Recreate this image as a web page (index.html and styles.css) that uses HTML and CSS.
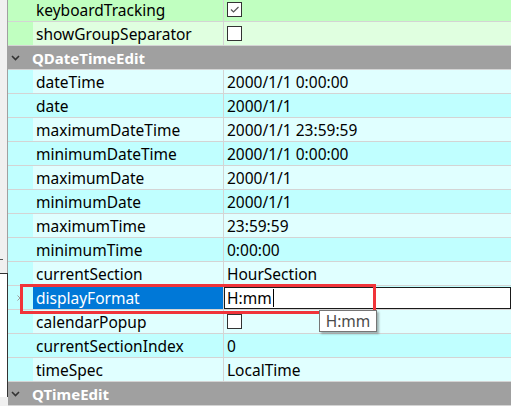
FILE: index.html
```html
<!DOCTYPE html>
<html>
<head>
<meta charset="utf-8">
<link rel="stylesheet" href="styles.css">
</head>
<body>
<div class="screen">
  <div class="side">
    <div class="side-top"><span class="dash"></span></div>
    <div class="side-mid"></div>
    <div class="side-bot"></div>
  </div>
  <div class="tree">
    <div class="row green dark"><div class="branch"></div><div class="name">keyboardTracking</div><div class="value"><span class="check on"><svg width="11" height="11" viewBox="0 0 11 11"><polyline points="2,5.5 4.5,8 9.5,3" fill="none" stroke="#555" stroke-width="1.2"/></svg></span></div></div>
    <div class="row green light"><div class="branch"></div><div class="name">showGroupSeparator</div><div class="value"><span class="check"></span></div></div>
    <div class="group"><svg class="chev" width="9" height="6" viewBox="0 0 9 6"><polyline points="1,1 4.5,4.5 8,1" fill="none" stroke="#333" stroke-width="1.6"/></svg><span>QDateTimeEdit</span></div>
    <div class="row cyan light"><div class="branch"></div><div class="name">dateTime</div><div class="value">2000/1/1 0:00:00</div></div>
    <div class="row cyan dark"><div class="branch"></div><div class="name">date</div><div class="value">2000/1/1</div></div>
    <div class="row cyan light"><div class="branch"></div><div class="name">maximumDateTime</div><div class="value">2000/1/1 23:59:59</div></div>
    <div class="row cyan dark"><div class="branch"></div><div class="name">minimumDateTime</div><div class="value">2000/1/1 0:00:00</div></div>
    <div class="row cyan light"><div class="branch"></div><div class="name">maximumDate</div><div class="value">2000/1/1</div></div>
    <div class="row cyan dark"><div class="branch"></div><div class="name">minimumDate</div><div class="value">2000/1/1</div></div>
    <div class="row cyan light"><div class="branch"></div><div class="name">maximumTime</div><div class="value">23:59:59</div></div>
    <div class="row cyan dark"><div class="branch"></div><div class="name">minimumTime</div><div class="value">0:00:00</div></div>
    <div class="row cyan light"><div class="branch"></div><div class="name">currentSection</div><div class="value">HourSection</div></div>
    <div class="row cyan dark"><div class="branch"><svg class="mark" width="4" height="6" viewBox="0 0 4 6"><polyline points="0.5,0.5 3,3 0.5,5.5" fill="none" stroke="#9a9a9a" stroke-width="1"/></svg></div><div class="name selected">displayFormat</div><div class="value edit"><span class="editor">H:mm<span class="caret"></span></span></div></div>
    <div class="row cyan light"><div class="branch"></div><div class="name">calendarPopup</div><div class="value"><span class="check"></span></div></div>
    <div class="row cyan dark"><div class="branch"></div><div class="name">currentSectionIndex</div><div class="value">0</div></div>
    <div class="row cyan light"><div class="branch"></div><div class="name">timeSpec</div><div class="value">LocalTime</div></div>
    <div class="group"><svg class="chev" width="9" height="6" viewBox="0 0 9 6"><polyline points="1,1 4.5,4.5 8,1" fill="none" stroke="#333" stroke-width="1.6"/></svg><span>QTimeEdit</span></div>
  </div>
  <div class="annot"></div>
  <div class="tip">H:mm</div>
</div>
</body>
</html>
```
FILE: styles.css
```css
html, body {
  margin: 0;
  padding: 0;
  background: #ffffff;
}
.screen {
  position: relative;
  width: 511px;
  height: 406px;
  overflow: hidden;
  display: flex;
  font-family: "Noto Sans", "Open Sans", sans-serif;
  font-size: 15.5px;
  color: #000;
}
.side {
  width: 8px;
  flex: none;
  display: flex;
  flex-direction: column;
}
.side-top {
  height: 273px;
  background: #f0f0f0;
  border-right: 1px solid #a0a0a0;
  box-sizing: border-box;
  position: relative;
}
.dash {
  position: absolute;
  left: 0;
  top: 259px;
  width: 3px;
  height: 1px;
  background: #555;
}
.side-mid {
  height: 124px;
  background: #ffffff;
  border-top: 1px solid #333;
  border-right: 1px solid #333;
  box-sizing: border-box;
}
.side-bot {
  flex: 1;
  background: #f0f0f0;
}
.tree {
  flex: 1;
  margin-top: -2px;
  display: flex;
  flex-direction: column;
}
.row {
  display: grid;
  grid-template-columns: 25px 191px 1fr;
  height: 24px;
  box-sizing: border-box;
  border-bottom: 1px solid #d4d4d4;
  flex: none;
}
.row > div {
  display: flex;
  align-items: center;
  white-space: nowrap;
  overflow: hidden;
}
.green.dark { background: #c0ffc0; }
.green.light { background: #e0ffe0; }
.green .branch { background: #c0ffc0; }
.cyan.dark { background: #c0ffff; }
.cyan.light { background: #e0ffff; }
.cyan .branch { background: #c0ffff; }
.name {
  padding-left: 3px;
  border-right: 1px solid #d4d4d4;
  box-sizing: border-box;
}
.name.selected {
  background: #0078d7;
  color: #ffffff;
}
.value {
  padding-left: 3px;
}
.branch {
  padding-left: 9px;
  box-sizing: border-box;
}
.mark { display: block; }
.check {
  width: 13px;
  height: 13px;
  border: 1px solid #333;
  background: #ffffff;
  box-sizing: content-box;
  display: flex;
  align-items: center;
  justify-content: center;
}
.group {
  height: 24px;
  flex: none;
  box-sizing: border-box;
  border-bottom: 1px solid #d4d4d4;
  background: #a0a0a0;
  display: flex;
  align-items: center;
  color: #ffffff;
  font-weight: bold;
  font-size: 15px;
}
.chev {
  margin-left: 3px;
  margin-right: 12px;
}
.value.edit {
  padding-left: 0;
  align-items: stretch;
  padding-top: 1px;
  padding-bottom: 0;
}
.editor {
  flex: 1;
  background: #ffffff;
  border: 1px solid #1a1a1a;
  padding-left: 2px;
  display: flex;
  align-items: center;
}
.caret {
  width: 1px;
  height: 18px;
  background: #000;
  margin-left: 1px;
}
.annot {
  position: absolute;
  left: 20px;
  top: 284px;
  width: 356px;
  height: 30px;
  box-sizing: border-box;
  border: 3px solid #f0343a;
}
.tip {
  position: absolute;
  left: 319px;
  top: 310px;
  width: 58px;
  height: 22px;
  box-sizing: border-box;
  border: 1px solid #767676;
  background: #ffffff;
  color: #4a4a4a;
  display: flex;
  align-items: center;
  justify-content: center;
  box-shadow: 2px 2px 2px rgba(0,0,0,0.3);
}
```
